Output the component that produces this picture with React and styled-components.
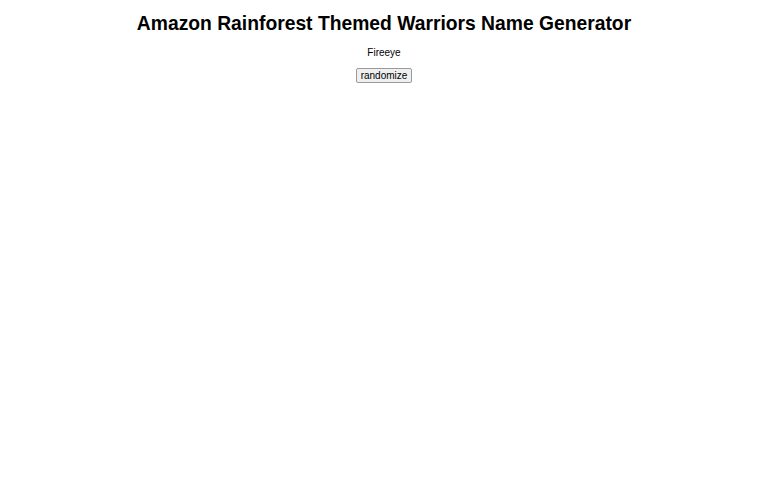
import React, { useState } from 'react';
import styled, { createGlobalStyle } from 'styled-components';

const GlobalStyle = createGlobalStyle`
  body {
    margin: 8px;
    font-family: "Liberation Sans", Arial, sans-serif;
    background: #ffffff;
    color: #000000;
  }
`;

const Page = styled.div`
  text-align: center;
`;

const Title = styled.h1`
  font-size: 19.3px;
  font-weight: 700;
  margin: 5px 0 12px;
`;

const Name = styled.p`
  font-size: 10px;
  margin: 0 0 7px;
`;

const Button = styled.button`
  font-family: "Liberation Sans", Arial, sans-serif;
  font-size: 10px;
  color: #000000;
  background: #efefef;
  border: 1px solid #9a9a9a;
  border-radius: 2px;
  padding: 1px 4px;
  cursor: pointer;
`;

const names = ['Fireeye', 'Jaguarclaw', 'Mossfall', 'Vinetail', 'Riverpelt'];

const App = () => {
  const [name, setName] = useState('Fireeye');
  return (
    <Page>
      <GlobalStyle />
      <Title>Amazon Rainforest Themed Warriors Name Generator</Title>
      <Name>{name}</Name>
      <Button onClick={() => setName(names[Math.floor(Math.random() * names.length)])}>
        randomize
      </Button>
    </Page>
  );
};

export default App;
